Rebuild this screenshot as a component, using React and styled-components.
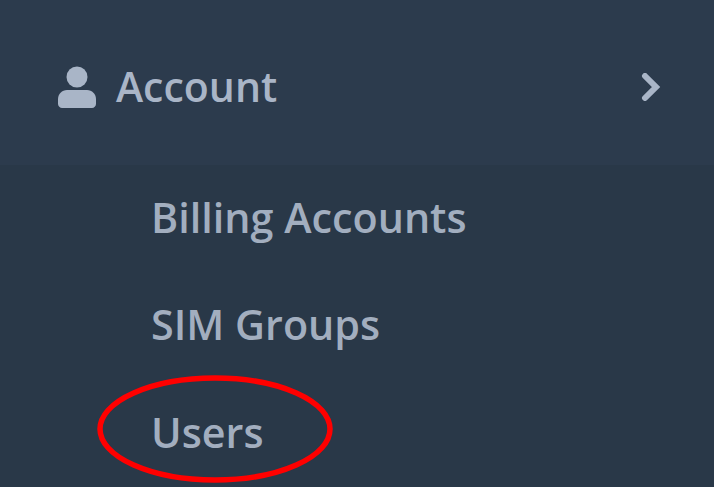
import React from 'react'
import styled, { createGlobalStyle } from 'styled-components'

const Global = createGlobalStyle`
  html, body {
    margin: 0;
    padding: 0;
    background: #293848;
  }
  body {
    font-family: "Open Sans", "Liberation Sans", sans-serif;
    overflow: hidden;
  }
`

const Sidebar = styled.nav`
  position: relative;
  width: 714px;
  height: 487px;
  overflow: hidden;
  background: #293848;
`

const Header = styled.div`
  display: flex;
  align-items: center;
  justify-content: space-between;
  height: 165px;
  padding: 8px 53px 0 58px;
  box-sizing: border-box;
  background: #2c3b4d;
  color: #a9b5c7;
`

const HeaderLeft = styled.div`
  display: flex;
  align-items: center;
  gap: 20px;
`

const Title = styled.span`
  font-size: 41px;
  font-weight: 600;
  line-height: 1;
`

const SubMenu = styled.ul`
  list-style: none;
  margin: -2px 0 0;
  padding: 0 0 0 151px;
  display: flex;
  flex-direction: column;
`

const SubItem = styled.li`
  height: 107.5px;
  display: flex;
  align-items: center;
  font-size: 41.3px;
  font-weight: 600;
  color: #a2aebf;
`

const Circle = styled.svg`
  position: absolute;
  left: 95px;
  top: 373px;
`

const UserIcon = () => (
  <svg width="38" height="42" viewBox="0 0 38 42" fill="currentColor">
    <circle cx="19" cy="11" r="10.5" />
    <path d="M9 24h20c5 0 9 4 9 9v5c0 2-2 4-4 4H4c-2 0-4-2-4-4v-5c0-5 4-9 9-9z" />
  </svg>
)

const ChevronIcon = () => (
  <svg width="20" height="28" viewBox="0 0 20 28" fill="none" stroke="currentColor" strokeWidth="6" strokeLinecap="round" strokeLinejoin="miter">
    <path d="M4 3l11 11L4 25" />
  </svg>
)

const App = () => (
  <>
    <Global />
    <Sidebar>
      <Header>
        <HeaderLeft>
          <UserIcon />
          <Title>Account</Title>
        </HeaderLeft>
        <ChevronIcon />
      </Header>
      <SubMenu>
        <SubItem>Billing Accounts</SubItem>
        <SubItem>SIM Groups</SubItem>
        <SubItem>Users</SubItem>
      </SubMenu>
      <Circle width="240" height="110" viewBox="0 0 240 110" fill="none">
        <ellipse cx="120" cy="56" rx="115" ry="51" stroke="#ff0000" strokeWidth="5.5" />
      </Circle>
    </Sidebar>
  </>
)

export default App
